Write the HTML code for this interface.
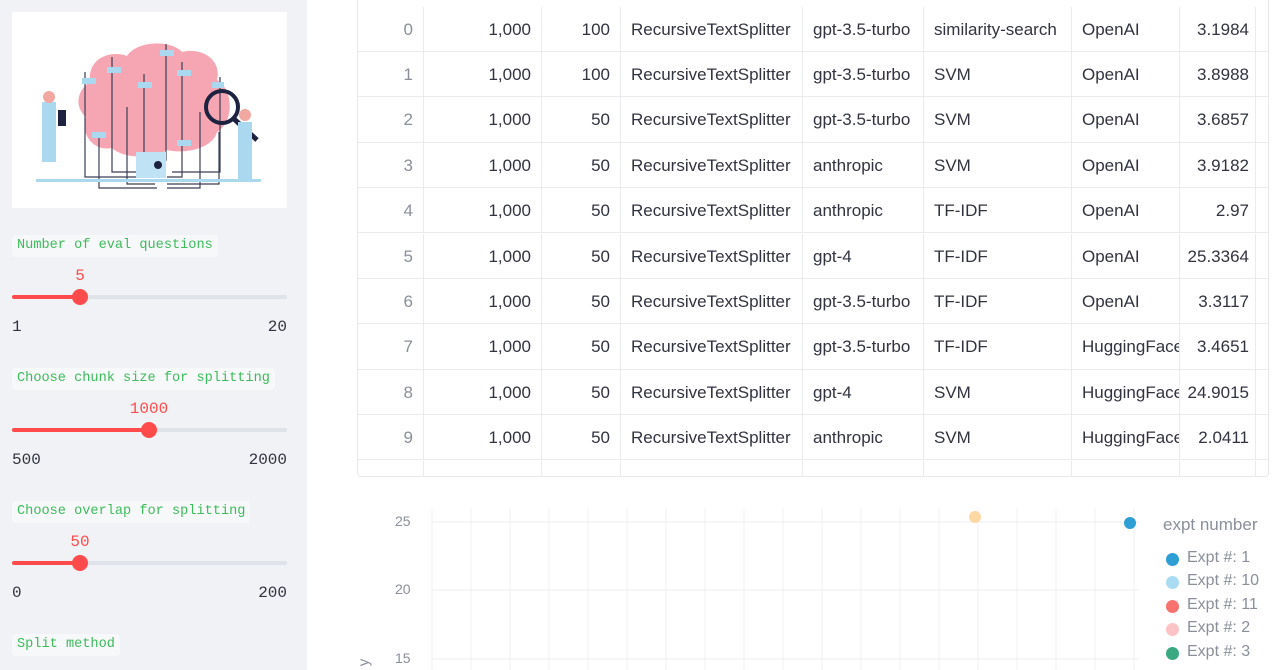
<!DOCTYPE html>
<html><head><meta charset="utf-8"><style>
*{margin:0;padding:0;box-sizing:border-box}
body{width:1280px;height:670px;overflow:hidden;background:#fff;font-family:"Liberation Sans",sans-serif;position:relative}
.sb{position:absolute;left:0;top:0;width:307px;height:670px;background:#f0f2f6}
.mono{font-family:"Liberation Mono","DejaVu Sans Mono",monospace}
.lbl{position:absolute;left:12px;height:22px;line-height:22px;padding:0 5px;background:#f7f8fa;border-radius:4px;color:#3dbb5a;font-size:13.6px}
.val{position:absolute;color:#ff4b4b;font-size:16px;transform:translateX(-50%)}
.track{position:absolute;left:12px;width:275px;height:4px;border-radius:2px;background:#dfe2e8}
.fill{position:absolute;left:0;top:0;height:4px;border-radius:2px;background:#ff4b4b}
.thumb{position:absolute;top:-6px;width:16px;height:16px;border-radius:50%;background:#ff4b4b;margin-left:-8px}
.mm{position:absolute;font-size:16px;color:#31333f}
.tbl{position:absolute;left:357px;top:-20px;width:912px;height:497px;border:1px solid #e6e8ec;border-radius:4px;overflow:hidden}
.row{position:absolute;left:0;height:45.4px;width:100%;border-bottom:1px solid #e9ebef;font-size:17px;color:#31333f}
.c{position:absolute;top:0;height:100%;line-height:45px;border-right:1px solid #e9ebef;padding:0 10px;white-space:nowrap;overflow:hidden}
.r{text-align:right}
.ax{position:absolute;font-size:14px;color:#8a8f99}
.lg{position:absolute;left:1166px;font-size:16px;color:#8a8f99}
.lg i{position:absolute;left:0;top:4px;width:13px;height:13px;border-radius:50%}
.lg span{margin-left:21px}
</style></head><body>
<div class="sb">
  <div style="position:absolute;left:12px;top:12px;width:275px;height:196px;background:#fff">
    <svg width="275" height="196" viewBox="0 0 275 196">
      <path d="M78 70 C75 45 100 38 115 44 C125 28 160 28 170 40 C190 35 210 48 205 68 C222 78 222 110 205 120 C200 138 170 142 155 138 C140 148 110 146 100 136 C80 140 68 120 74 105 C62 95 65 78 78 70Z" fill="#f6a6b2"/>
      <g fill="none" stroke="#3a3f55" stroke-width="1.2">
        <path d="M73 60 V165 H145"/><path d="M87 125 V176 H145"/><path d="M100 45 V160 H140"/><path d="M115 95 V172 H143"/><path d="M132 62 V148 H143"/>
        <path d="M154 32 V148 H150"/><path d="M170 50 V165 H155"/><path d="M188 100 V176 H155"/><path d="M207 120 V172 H155"/><path d="M208 65 V160 H160"/>
      </g>
      <g fill="#a9d8ef"><rect x="95" y="55" width="14" height="6"/><rect x="126" y="70" width="14" height="6"/><rect x="148" y="38" width="14" height="6"/><rect x="165" y="58" width="14" height="6"/><rect x="80" y="120" width="14" height="6"/><rect x="165" y="128" width="14" height="6"/><rect x="70" y="66" width="14" height="6"/><rect x="200" y="70" width="12" height="6"/></g>
      <rect x="124" y="140" width="30" height="26" fill="#bfe3f5"/><circle cx="146" cy="153" r="4" fill="#1d2240"/>
      <circle cx="210" cy="95" r="16" fill="none" stroke="#1d2240" stroke-width="4"/><path d="M221 106 L245 128" stroke="#1d2240" stroke-width="5"/>
      <path d="M30 90 h14 v60 h-14z M226 110 h14 v60 h-14z" fill="#a9d8ef"/>
      <circle cx="37" cy="85" r="6" fill="#f1a8a0"/><circle cx="233" cy="103" r="6" fill="#f1a8a0"/>
      <rect x="46" y="98" width="8" height="16" fill="#1d2240"/>
      <rect x="24" y="167" width="225" height="3" fill="#a9d8ef"/>
    </svg>
  </div>
  <div class="lbl mono" style="top:235px">Number of eval questions</div>
  <div class="val mono" style="left:80px;top:267px">5</div>
  <div class="track" style="top:295px"><div class="fill" style="width:68px"></div><div class="thumb" style="left:68px"></div></div>
  <div class="mm mono" style="left:12px;top:318px">1</div><div class="mm mono" style="right:20px;top:318px">20</div>

  <div class="lbl mono" style="top:368px">Choose chunk size for splitting</div>
  <div class="val mono" style="left:149px;top:400px">1000</div>
  <div class="track" style="top:428px"><div class="fill" style="width:137px"></div><div class="thumb" style="left:137px"></div></div>
  <div class="mm mono" style="left:12px;top:451px">500</div><div class="mm mono" style="right:20px;top:451px">2000</div>

  <div class="lbl mono" style="top:501px">Choose overlap for splitting</div>
  <div class="val mono" style="left:80px;top:533px">50</div>
  <div class="track" style="top:561px"><div class="fill" style="width:68px"></div><div class="thumb" style="left:68px"></div></div>
  <div class="mm mono" style="left:12px;top:584px">0</div><div class="mm mono" style="right:20px;top:584px">200</div>

  <div class="lbl mono" style="top:634px">Split method</div>
</div>

<div class="tbl" id="t"></div>
<script>
var d=[["0","100","gpt-3.5-turbo","similarity-search","OpenAI","3.1984"],["1","100","gpt-3.5-turbo","SVM","OpenAI","3.8988"],["2","50","gpt-3.5-turbo","SVM","OpenAI","3.6857"],["3","50","anthropic","SVM","OpenAI","3.9182"],["4","50","anthropic","TF-IDF","OpenAI","2.97"],["5","50","gpt-4","TF-IDF","OpenAI","25.3364"],["6","50","gpt-3.5-turbo","TF-IDF","OpenAI","3.3117"],["7","50","gpt-3.5-turbo","TF-IDF","HuggingFace","3.4651"],["8","50","gpt-4","SVM","HuggingFace","24.9015"],["9","50","anthropic","SVM","HuggingFace","2.0411"],["","","","","",""]];
var cols=[[0,66,1],[66,118,1],[184,79,1],[263,182,0],[445,121,0],[566,148,0],[714,108,0],[822,76,1],[898,20,0]];
var h="";
d.forEach(function(r,i){var v=[r[0],r[0]===""?"":"1,000",r[1],r[0]===""?"":"RecursiveTextSplitter",r[2],r[3],r[4],r[5],""];
h+='<div class="row" style="top:'+(25.5+i*45.4)+'px">';
cols.forEach(function(c,j){h+='<div class="c'+(c[2]?' r':'')+'" style="left:'+c[0]+'px;width:'+c[1]+'px;'+(j==0?'color:#8a8f99':'')+(j==6?';padding-right:0':'')+(j==7?';padding-right:6px;padding-left:2px':'')+'">'+v[j]+'</div>';});
h+='</div>';});
document.getElementById('t').innerHTML=h;
</script>

<svg style="position:absolute;left:0;top:0" width="1280" height="670">
  <g stroke="#e9ecf1" stroke-width="1">
    <line x1="432" y1="522" x2="1139" y2="522"/><line x1="432" y1="590" x2="1139" y2="590"/><line x1="432" y1="659" x2="1139" y2="659"/>
  </g>
  <g stroke="#eef0f4" stroke-width="1" id="vg"></g>
  <circle cx="975" cy="517" r="6" fill="#fdd8a2"/>
  <circle cx="1130" cy="523" r="6" fill="#2e9fd4"/>
</svg>
<script>
var g=document.getElementById('vg'),s='';for(var x=432;x<1140;x+=39){s+='<line x1="'+x+'" y1="508" x2="'+x+'" y2="670"/>';}g.innerHTML=s;
</script>
<div class="ax" style="left:395px;top:513px">25</div>
<div class="ax" style="left:395px;top:581px">20</div>
<div class="ax" style="left:395px;top:650px">15</div>
<div class="ax" style="left:360px;top:654px;transform:rotate(-90deg);font-size:15px">y</div>
<div style="position:absolute;left:1163px;top:515px;font-size:17px;color:#8a8f99">expt number</div>
<div class="lg" style="top:549px"><i style="background:#2e9fd4"></i><span>Expt #: 1</span></div>
<div class="lg" style="top:572px"><i style="background:#a9dcf3"></i><span>Expt #: 10</span></div>
<div class="lg" style="top:596px"><i style="background:#f8736f"></i><span>Expt #: 11</span></div>
<div class="lg" style="top:619px"><i style="background:#fcc4c6"></i><span>Expt #: 2</span></div>
<div class="lg" style="top:643px"><i style="background:#3aa981"></i><span>Expt #: 3</span></div>
</body></html>
